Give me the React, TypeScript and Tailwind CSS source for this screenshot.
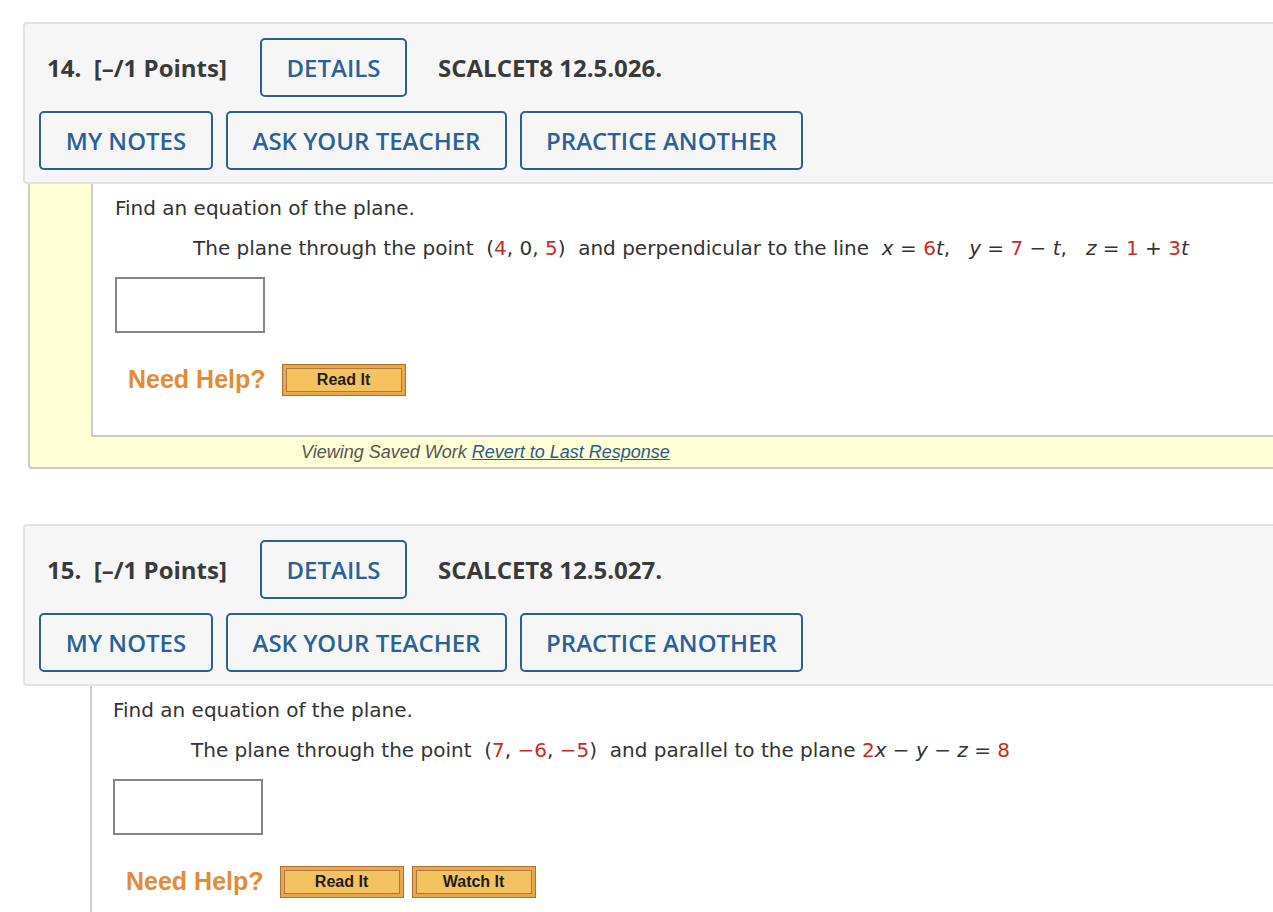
import React from "react";

const HEAD_FONT = { fontFamily: '"Open Sans", "Liberation Sans", sans-serif' };
const BODY_FONT = { fontFamily: '"DejaVu Sans", Verdana, sans-serif' };
const ARIAL = { fontFamily: '"Liberation Sans", Arial, sans-serif' };

function Btn({ w, children }: { w: string; children: React.ReactNode }) {
  return (
    <div
      className={`${w} h-[59px] shrink-0 border-[2.5px] border-[#2d5f92] rounded-[5px] flex items-center justify-center text-[24px] font-semibold text-[#2b6198] bg-[#f6f6f6]`}
      style={HEAD_FONT}
    >
      {children}
    </div>
  );
}

function Header({ num, code }: { num: string; code: string }) {
  return (
    <div className="w-[1300px] h-[162px] rounded-[4px] border-2 border-[#e2e2e2] bg-[#f6f6f6] pt-[14px] pl-[14px] flex flex-col gap-[14px]">
      <div className="flex items-center h-[59px]">
        <span className="ml-[8px] w-[213px] shrink-0 text-[24px] font-bold text-[#3a3a3a] whitespace-pre" style={HEAD_FONT}>
          {num + ".  [–/1 Points]"}
        </span>
        <Btn w="w-[147px]">DETAILS</Btn>
        <span className="ml-[31px] text-[24px] font-bold text-[#3a3a3a]" style={HEAD_FONT}>
          {"SCALCET8 " + code + "."}
        </span>
      </div>
      <div className="flex gap-[13px] h-[59px]">
        <Btn w="w-[174px]">MY NOTES</Btn>
        <Btn w="w-[281px]">ASK YOUR TEACHER</Btn>
        <Btn w="w-[283px]">PRACTICE ANOTHER</Btn>
      </div>
    </div>
  );
}

function R({ children }: { children: React.ReactNode }) {
  return <span className="text-[#cf2a1f]">{children}</span>;
}
function I({ children }: { children: React.ReactNode }) {
  return <span className="italic">{children}</span>;
}

function OrangeBtn({ label }: { label: string }) {
  return (
    <div className="w-[124px] h-[32px] border border-[#b0712f] bg-[#eba54c] p-[3px]">
      <div
        className="w-full h-full border border-[#b07a3e] bg-[#f4c25f] flex items-center justify-center text-[16px] font-bold text-[#1e1e1e]"
        style={ARIAL}
      >
        {label}
      </div>
    </div>
  );
}

function Content({ line, buttons }: { line: React.ReactNode; buttons: string[] }) {
  return (
    <div className="text-[#333333] text-[20px]" style={BODY_FONT}>
      <div className="h-[24px] leading-[24px]">Find an equation of the plane.</div>
      <div className="mt-[16px] ml-[78px] h-[24px] leading-[24px] whitespace-pre">{line}</div>
      <div className="mt-[17px] w-[150px] h-[56px] border-2 border-[#858585] bg-white" />
      <div className="mt-[31px] flex items-center h-[32px]">
        <span className="ml-[13px] text-[25px] font-bold text-[#e38b37]" style={ARIAL}>
          Need Help?
        </span>
        <div className="ml-[16px] flex gap-[8px]">
          {buttons.map((b) => (
            <OrangeBtn key={b} label={b} />
          ))}
        </div>
      </div>
    </div>
  );
}

export default function App() {
  const line14 = (
    <>
      {"The plane through the point  ("}
      <R>4</R>
      {", 0, "}
      <R>5</R>
      {")  and perpendicular to the line  "}
      <I>x</I>
      {" = "}
      <R>6</R>
      <I>t</I>
      {",   "}
      <I>y</I>
      {" = "}
      <R>7</R>
      {" − "}
      <I>t</I>
      {",   "}
      <I>z</I>
      {" = "}
      <R>1</R>
      {" + "}
      <R>3</R>
      <I>t</I>
    </>
  );
  const line15 = (
    <>
      {"The plane through the point  ("}
      <R>7</R>
      {", "}
      <R>−6</R>
      {", "}
      <R>−5</R>
      {")  and parallel to the plane "}
      <R>2</R>
      <I>x</I>
      {" − "}
      <I>y</I>
      {" − "}
      <I>z</I>
      {" = "}
      <R>8</R>
    </>
  );

  return (
    <div className="w-[1273px] h-[912px] overflow-hidden bg-white pt-[22px] pl-[23px]">
      <Header num="14" code="12.5.026" />
      <div className="ml-[5px] w-[1295px] bg-[#ffffd5] border-l-2 border-b-2 border-[#cccccc] rounded-bl-[4px]">
        <div className="ml-[61px] bg-white border-l-2 border-b-2 border-[#cccccc] pl-[22px] pt-[12px] pb-[39px]">
          <Content line={line14} buttons={["Read It"]} />
        </div>
        <div className="h-[30px] pl-[271px] flex items-center text-[18px] italic text-[#555555]" style={ARIAL}>
          <span>Viewing Saved Work&nbsp;</span>
          <span className="text-[#2a5b8e] underline">Revert to Last Response</span>
        </div>
      </div>

      <div className="mt-[55px]">
        <Header num="15" code="12.5.027" />
      </div>
      <div className="ml-[67px] w-[1250px] h-[400px] bg-white border-l-2 border-[#cccccc] pl-[21px] pt-[12px]">
        <Content line={line15} buttons={["Read It", "Watch It"]} />
      </div>
    </div>
  );
}
